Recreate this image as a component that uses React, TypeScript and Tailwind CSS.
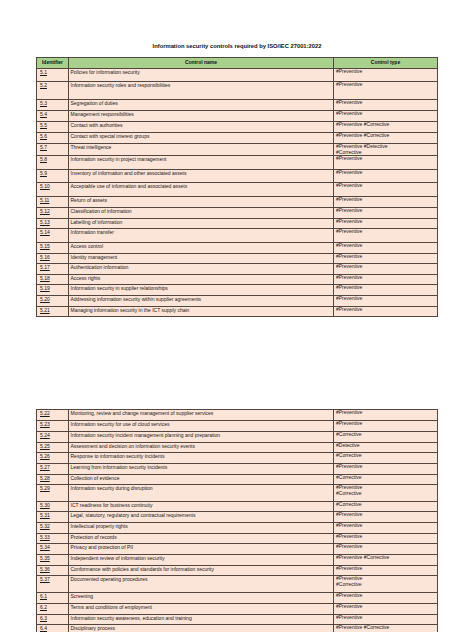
import React from "react";

type Row = { id: string; name: string; type: string[]; h: string };

const top: Row[] = [
  { id: "5.1", name: "Policies for information security", type: ["#Preventive"], h: "h-[13px]" },
  { id: "5.2", name: "Information security roles and responsibilities", type: ["#Preventive"], h: "h-[18px]" },
  { id: "5.3", name: "Segregation of duties", type: ["#Preventive"], h: "h-[11px]" },
  { id: "5.4", name: "Management responsibilities", type: ["#Preventive"], h: "h-[11px]" },
  { id: "5.5", name: "Contact with authorities", type: ["#Preventive #Corrective"], h: "h-[11px]" },
  { id: "5.6", name: "Contact with special interest groups", type: ["#Preventive #Corrective"], h: "h-[11px]" },
  { id: "5.7", name: "Threat intelligence", type: ["#Preventive #Detective", "#Corrective"], h: "h-[12px]" },
  { id: "5.8", name: "Information security in project management", type: ["#Preventive"], h: "h-[14px]" },
  { id: "5.9", name: "Inventory of information and other associated assets", type: ["#Preventive"], h: "h-[13px]" },
  { id: "5.10", name: "Acceptable use of information and associated assets", type: ["#Preventive"], h: "h-[14px]" },
  { id: "5.11", name: "Return of assets", type: ["#Preventive"], h: "h-[11px]" },
  { id: "5.12", name: "Classification of information", type: ["#Preventive"], h: "h-[11px]" },
  { id: "5.13", name: "Labelling of information", type: ["#Preventive"], h: "h-[10px]" },
  { id: "5.14", name: "Information transfer", type: ["#Preventive"], h: "h-[14px]" },
  { id: "5.15", name: "Access control", type: ["#Preventive"], h: "h-[11px]" },
  { id: "5.16", name: "Identity management", type: ["#Preventive"], h: "h-[10px]" },
  { id: "5.17", name: "Authentication information", type: ["#Preventive"], h: "h-[11px]" },
  { id: "5.18", name: "Access rights", type: ["#Preventive"], h: "h-[10px]" },
  { id: "5.19", name: "Information security in supplier relationships", type: ["#Preventive"], h: "h-[11px]" },
  { id: "5.20", name: "Addressing information security within supplier agreements", type: ["#Preventive"], h: "h-[11px]" },
  { id: "5.21", name: "Managing information security in the ICT supply chain", type: ["#Preventive"], h: "h-[10px]" },
];

const bottom: Row[] = [
  { id: "5.22", name: "Monitoring, review and change management of supplier services", type: ["#Preventive"], h: "h-[11px]" },
  { id: "5.23", name: "Information security for use of cloud services", type: ["#Preventive"], h: "h-[11px]" },
  { id: "5.24", name: "Information security incident management planning and preparation", type: ["#Corrective"], h: "h-[11px]" },
  { id: "5.25", name: "Assessment and decision on information security events", type: ["#Detective"], h: "h-[10px]" },
  { id: "5.26", name: "Response to information security incidents", type: ["#Corrective"], h: "h-[11px]" },
  { id: "5.27", name: "Learning from information security incidents", type: ["#Preventive"], h: "h-[11px]" },
  { id: "5.28", name: "Collection of evidence", type: ["#Corrective"], h: "h-[10px]" },
  { id: "5.29", name: "Information security during disruption", type: ["#Preventive", "#Corrective"], h: "h-[17px]" },
  { id: "5.30", name: "ICT readiness for business continuity", type: ["#Corrective"], h: "h-[10px]" },
  { id: "5.31", name: "Legal, statutory, regulatory and contractual requirements", type: ["#Preventive"], h: "h-[11px]" },
  { id: "5.32", name: "Intellectual property rights", type: ["#Preventive"], h: "h-[11px]" },
  { id: "5.33", name: "Protection of records", type: ["#Preventive"], h: "h-[10px]" },
  { id: "5.34", name: "Privacy and protection of PII", type: ["#Preventive"], h: "h-[11px]" },
  { id: "5.35", name: "Independent review of information security", type: ["#Preventive #Corrective"], h: "h-[11px]" },
  { id: "5.36", name: "Conformance with policies and standards for information security", type: ["#Preventive"], h: "h-[10px]" },
  { id: "5.37", name: "Documented operating procedures", type: ["#Preventive", "#Corrective"], h: "h-[17px]" },
  { id: "6.1", name: "Screening", type: ["#Preventive"], h: "h-[11px]" },
  { id: "6.2", name: "Terms and conditions of employment", type: ["#Preventive"], h: "h-[11px]" },
  { id: "6.3", name: "Information security awareness, education and training", type: ["#Preventive"], h: "h-[10px]" },
  { id: "6.4", name: "Disciplinary process", type: ["#Preventive #Corrective"], h: "h-[11px]" },
];

function DataRow({ r }: { r: Row }) {
  return (
    <div className={`flex border-t border-[#54453e] bg-[#fbe4d8] ${r.h}`}>
      <div className="w-[31px] shrink-0 pl-[3px] pt-[0.5px]">
        <span className="underline decoration-[0.5px] underline-offset-[0.5px]">{r.id}</span>
      </div>
      <div className="w-[265px] shrink-0 border-l border-[#54453e] pl-[1.5px] pt-[0.5px]">{r.name}</div>
      <div className="flex-1 border-l border-[#54453e] pl-[2px] leading-[5.6px]">
        {r.type.map((t, i) => (
          <div key={i}>{t}</div>
        ))}
      </div>
    </div>
  );
}

export default function App() {
  return (
    <div
      className="relative h-[632px] w-[474px] overflow-hidden bg-white text-[5px] leading-[5.8px] text-[#1c1917]"
      style={{ fontFamily: '"Liberation Sans", Arial, sans-serif' }}
    >
      <div className="pt-[43px] text-center text-[5.8px] font-bold leading-[7px] text-[#111]">
        Information security controls required by ISO/IEC 27001:2022
      </div>
      <div className="mx-[36px] mt-[7px] border-x border-b border-[#54453e]">
        <div className="flex h-[11px] border-t border-[#54453e] bg-[#a8d18e] font-bold text-[#111]">
          <div className="w-[31px] shrink-0 pt-[1.5px] text-center">Identifier</div>
          <div className="w-[265px] shrink-0 border-l border-[#54453e] pt-[1.5px] text-center">Control name</div>
          <div className="flex-1 border-l border-[#54453e] pt-[1.5px] text-center">Control type</div>
        </div>
        {top.map((r) => (
          <DataRow key={r.id} r={r} />
        ))}
      </div>
      <div className="mx-[36px] mt-[92px] border-x border-[#54453e]">
        {bottom.map((r) => (
          <DataRow key={r.id} r={r} />
        ))}
      </div>
    </div>
  );
}
